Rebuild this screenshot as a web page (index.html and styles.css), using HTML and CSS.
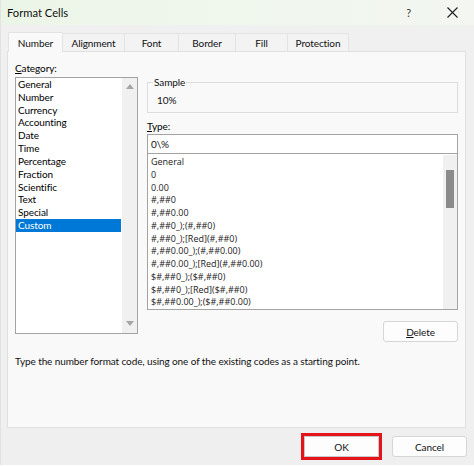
FILE: index.html
```html
<!DOCTYPE html>
<html>
<head>
<meta charset="utf-8">
<title>Format Cells</title>
<link rel="stylesheet" href="styles.css">
</head>
<body>
<div class="window">
  <div class="titlebar">
    <span class="title">Format Cells</span>
    <span class="help">?</span>
    <span class="close"><svg width="11" height="11" viewBox="0 0 11 11"><path d="M0.5 0.5L10.5 10.5M10.5 0.5L0.5 10.5" stroke="#1f1f1f" stroke-width="1.1" fill="none"/></svg></span>
  </div>
  <div class="tabs">
    <div class="tab active">Number</div>
    <div class="tab">Alignment</div>
    <div class="tab">Font</div>
    <div class="tab">Border</div>
    <div class="tab">Fill</div>
    <div class="tab">Protection</div>
  </div>
  <div class="panel">
    <div class="columns">
      <div class="left">
        <div class="label"><u>C</u>ategory:</div>
        <div class="catlist">
          <div class="items">
            <div class="item">General</div>
            <div class="item">Number</div>
            <div class="item">Currency</div>
            <div class="item">Accounting</div>
            <div class="item">Date</div>
            <div class="item">Time</div>
            <div class="item">Percentage</div>
            <div class="item">Fraction</div>
            <div class="item">Scientific</div>
            <div class="item">Text</div>
            <div class="item">Special</div>
            <div class="item sel">Custom</div>
          </div>
          <div class="vscroll">
            <svg class="arrow" width="8" height="5" viewBox="0 0 8 5"><path d="M0 5L4 0L8 5Z" fill="#a6a6a6"/></svg>
            <svg class="arrow" width="8" height="5" viewBox="0 0 8 5"><path d="M0 0L4 5L8 0Z" fill="#a6a6a6"/></svg>
          </div>
        </div>
      </div>
      <div class="right">
        <div class="sample">
          <span class="legend">Sample</span>
          <div class="sample-value">10%</div>
        </div>
        <div class="label type-label"><u>T</u>ype:</div>
        <div class="type-input">0\%</div>
        <div class="typelist">
          <div class="items titems">
            <div class="titem">General</div>
            <div class="titem">0</div>
            <div class="titem">0.00</div>
            <div class="titem">#,##0</div>
            <div class="titem">#,##0.00</div>
            <div class="titem">#,##0_);(#,##0)</div>
            <div class="titem">#,##0_);[Red](#,##0)</div>
            <div class="titem">#,##0.00_);(#,##0.00)</div>
            <div class="titem">#,##0.00_);[Red](#,##0.00)</div>
            <div class="titem">$#,##0_);($#,##0)</div>
            <div class="titem">$#,##0_);[Red]($#,##0)</div>
            <div class="titem">$#,##0.00_);($#,##0.00)</div>
          </div>
          <div class="vscroll2"><div class="thumb"></div></div>
        </div>
        <div class="delete-row"><button class="btn"><u>D</u>elete</button></div>
      </div>
    </div>
    <div class="hint">Type the number format code, using one of the existing codes as a starting point.</div>
  </div>
  <div class="footer">
    <button class="btn ok">OK</button>
    <button class="btn">Cancel</button>
  </div>
</div>
</body>
</html>
```

FILE: styles.css
```css
* { box-sizing: border-box; }
html, body { margin: 0; padding: 0; background: #ffffff; }
body {
  width: 474px;
  height: 467px;
  overflow: hidden;
  font-family: Lato, "Open Sans", "Liberation Sans", sans-serif;
  font-size: 10px;
  letter-spacing: -0.1px;
  color: #000;
}
.window {
  width: 474px;
  height: 465px;
  background: #f0f0f0;
  display: flex;
  flex-direction: column;
  border-left: 1px solid #e2e2e2;
}
.titlebar {
  height: 25px;
  flex: none;
  display: flex;
  align-items: center;
  padding-left: 6px;
  background: linear-gradient(90deg, #ebf5e7 0%, #f0f7ed 50%, #f3f6f1 100%);
}
.title { font-size: 11.2px; color: #111; flex: 1; letter-spacing: 0; }
.help { font-size: 11px; color: #333; margin-right: 36px; }
.close { display: flex; margin-right: 16px; }

.tabs {
  display: flex;
  margin-top: 7px;
  padding-left: 7px;
  height: 20px;
  flex: none;
  margin-bottom: -1px;
}
.tab {
  font-size: 10px;
  color: #111;
  display: flex;
  align-items: center;
  justify-content: center;
  border: 1px solid #e3e3e3;
  border-left: none;
  border-bottom: none;
  background: #f3f3f3;
  margin-top: 1px;
}
.tab:nth-child(1) { width: 55px; }
.tab:nth-child(2) { width: 62px; }
.tab:nth-child(3) { width: 54px; }
.tab:nth-child(4) { width: 57px; }
.tab:nth-child(5) { width: 52px; }
.tab:nth-child(6) { width: 61px; }
.tab.active {
  background: #f9f9f9;
  border-left: 1px solid #e3e3e3;
  margin-top: 0;
  z-index: 1;
}
.panel {
  margin-left: 6px;
  width: 459px;
  height: 377px;
  flex: none;
  background: #f9f9f9;
  border: 1px solid #e0e0e0;
  padding: 9px 7px 0 7px;
}
.columns {
  display: flex;
  gap: 9px;
}
.left { width: 123px; flex: none; }
.right { width: 311px; flex: none; }
.label {
  font-size: 10px;
  line-height: 14px;
  height: 14px;
}
.label u { text-underline-offset: 1px; }
.catlist {
  margin-top: 2px;
  height: 257px;
  border: 1px solid #a3a3a3;
  background: #fff;
  display: flex;
}
.items { flex: 1; min-width: 0; overflow: hidden; }
.item {
  font-size: 10px;
  height: 12.82px;
  line-height: 12.82px;
  padding-left: 2px;
  white-space: nowrap;
}
.item.sel { background: #0078d7; color: #fff; margin-right: 1px; }
.vscroll {
  width: 15px;
  flex: none;
  background: #f0f0f0;
  display: flex;
  flex-direction: column;
  align-items: center;
  justify-content: space-between;
  padding: 6px 0 7px 0;
}
.sample {
  margin-top: 21px;
  height: 31px;
  border: 1px solid #dddddd;
  padding-left: 5px;
  display: flex;
  flex-direction: column;
  align-items: flex-start;
}
.legend {
  line-height: 12px;
  background: #f9f9f9;
  padding: 0 1px;
  margin-top: -7px;
  color: #111;
}
.sample-value {
  line-height: 12px;
  padding-left: 4px;
  margin-top: 6px;
  color: #111;
}
.type-label { margin-top: 6px; }
.type-input {
  margin-top: 1px;
  height: 20px;
  border: 1px solid #a3a3a3;
  background: #fff;
  line-height: 18px;
  padding-left: 3px;
  color: #111;
}
.typelist {
  margin-top: -1px;
  height: 157px;
  border: 1px solid #a3a3a3;
  background: #fff;
  display: flex;
  padding-top: 1px;
}
.titems { padding-top: 1px; }
.titem {
  font-family: "Open Sans", "Noto Sans", sans-serif;
  font-size: 9px;
  letter-spacing: 0;
  height: 12.77px;
  line-height: 12.77px;
  padding-left: 3px;
  white-space: nowrap;
  color: #1a1a1a;
}
.vscroll2 {
  width: 14px;
  flex: none;
  background: #f0f0f0;
  padding: 15px 3px 0 3px;
}
.thumb {
  height: 38px;
  background: #8b8b8b;
}
.delete-row {
  display: flex;
  justify-content: flex-end;
  margin-top: 11px;
}
.btn {
  font-family: inherit;
  font-size: 10px;
  letter-spacing: inherit;
  color: #111;
  width: 75px;
  height: 21px;
  padding: 0;
  background: #fdfdfd;
  border: 1px solid #d6d6d6;
  border-radius: 3px;
}
.hint {
  margin-top: 12px;
  line-height: 14px;
  color: #111;
}
.footer {
  flex: 1;
  display: flex;
  justify-content: flex-end;
  align-items: center;
  gap: 13px;
  padding-right: 7px;
  background: #efefef;
}
.ok {
  border-radius: 0;
  outline: 3px solid #e5141b;
  outline-offset: 0;
  border-color: #c8c8c8;
}
```
